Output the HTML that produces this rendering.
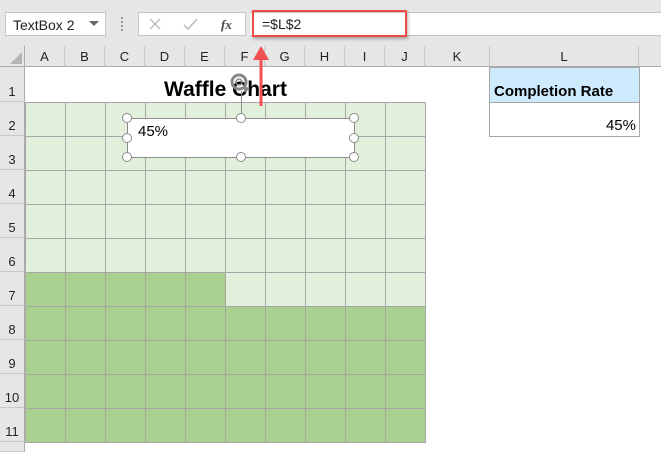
<!DOCTYPE html>
<html><head><meta charset="utf-8"><style>
*{margin:0;padding:0;box-sizing:border-box}
body{width:661px;height:448px;overflow:hidden;background:#fff;font-family:"Liberation Sans",Arial,sans-serif;position:relative}
.abs{position:absolute}
.top{left:0;top:0;width:661px;height:46px;background:#e6e6e6}
.namebox{left:5px;top:12px;width:101px;height:24px;background:#fff;border:1px solid #c6c6c6;font-size:14px;color:#222;padding:4px 0 0 7px}
.fx{left:138px;top:12px;width:108px;height:24px;background:#fff;border:1px solid #c6c6c6}
.finput{left:250px;top:12px;width:411px;height:24px;background:#fff;border-top:1px solid #c6c6c6;border-bottom:1px solid #c6c6c6}
.red{left:252px;top:10px;width:155px;height:27px;border:2px solid #ee4b4b;box-shadow:1px 2px 3px rgba(0,0,0,.3)}
.ch{top:46px;height:21px;background:#e6e6e6;border-right:1px solid #c8c8c8;border-bottom:1px solid #ababab;font-size:13px;text-align:center;line-height:21px;color:#222}
.rh{left:0;width:25px;background:#e6e6e6;border-bottom:1px solid #c8c8c8;border-right:1px solid #ababab;font-size:13px;color:#222;text-align:center;display:flex;align-items:flex-end;justify-content:center;padding-bottom:2px}
.c{border-right:1px solid #a6a6a6;border-bottom:1px solid #a6a6a6}
.lt{background:#e2efda}.dk{background:#a9d08e}
.h{width:10px;height:10px;border:1.5px solid #8c8c8c;border-radius:50%;background:#fff}
</style></head><body>
<div class="abs top"></div>
<div class="abs namebox">TextBox 2</div>
<svg class="abs" style="left:89px;top:21px" width="10" height="6"><path d="M0 0 L10 0 L5 5Z" fill="#666"/></svg>
<div class="abs" style="left:121px;top:17px;width:2px;height:16px;background:repeating-linear-gradient(#999 0 2px,transparent 2px 4px)"></div>
<div class="abs fx"></div>
<svg class="abs" style="left:148px;top:17px" width="90" height="16">
<path d="M2 2 L12 12 M12 2 L2 12" stroke="#b8b8b8" stroke-width="1.3"/>
<path d="M36 8 L40 12 L49 2" stroke="#b8b8b8" stroke-width="1.5" fill="none"/>
<text x="73" y="12" font-family="Liberation Serif" font-style="italic" font-weight="bold" font-size="13" fill="#444">fx</text>
</svg>
<div class="abs finput"></div>
<div class="abs" style="left:262px;top:16px;font-size:14px;color:#222">=$L$2</div>
<div class="abs red"></div>

<div class="abs" style="left:0;top:46px;width:25px;height:21px;background:#e6e6e6;border-right:1px solid #ababab;border-bottom:1px solid #ababab"></div>
<svg class="abs" style="left:10px;top:52px" width="13" height="13"><path d="M12 0 L12 12 L0 12Z" fill="#b5b5b5"/></svg>
<script>
var cw=[["A",25,40],["B",65,40],["C",105,40],["D",145,40],["E",185,40],["F",225,40],["G",265,40],["H",305,40],["I",345,40],["J",385,40],["K",425,65],["L",490,149],["",639,30]];
var h="";
cw.forEach(function(c){h+='<div class="abs ch" style="left:'+c[1]+'px;width:'+c[2]+'px">'+c[0]+'</div>';});
for(var r=1;r<=11;r++){var t=67+(r-1)*34+(r>1?1:0);var hh=r==1?35:34;h+='<div class="abs rh" style="top:'+t+'px;height:'+hh+'px">'+r+'</div>';}
h+='<div class="abs rh" style="top:442px;height:10px"></div>';
for(var r=2;r<=11;r++){for(var i=0;i<10;i++){var t=102+(r-2)*34;var dark=(r>=8)||(r==7&&i<5);
h+='<div class="abs c '+(dark?'dk':'lt')+'" style="left:'+(25+i*40)+'px;top:'+t+'px;width:41px;height:35px;border:1px solid #a6a6a6"></div>';}}
document.write(h);
</script>
<div class="abs" style="left:25px;top:442px;width:401px;height:1px;background:#a6a6a6"></div>
<div class="abs" style="left:25px;top:78px;width:401px;text-align:center;font-weight:bold;font-size:21px;color:#000">Waffle Chart</div>
<div class="abs" style="left:489px;top:67px;width:151px;height:36px;background:#cdebfd;border:1px solid #a6a6a6;font-weight:bold;font-size:15px;padding:15px 0 0 4px">Completion Rate</div>
<div class="abs" style="left:489px;top:102px;width:151px;height:35px;border:1px solid #a6a6a6;font-size:15px;text-align:right;padding:14px 3px 0 0">45%</div>
<div class="abs" style="left:127px;top:118px;width:228px;height:40px;background:#fff;border:1px solid #8c8c8c;font-size:15px;padding:4px 0 0 10px">45%</div>
<div class="abs" style="left:241px;top:91px;width:1px;height:27px;background:#8c8c8c"></div>
<svg class="abs" style="left:228px;top:71px" width="26" height="24"><circle cx="11" cy="11" r="7" fill="none" stroke="#888" stroke-width="3"/><circle cx="11" cy="11" r="3" fill="none" stroke="#888" stroke-width="1.5"/><path d="M15 15 L22 17 L17 22Z" fill="#888"/></svg>
<div class="abs h" style="left:122px;top:113px"></div>
<div class="abs h" style="left:236px;top:113px"></div>
<div class="abs h" style="left:349px;top:113px"></div>
<div class="abs h" style="left:122px;top:133px"></div>
<div class="abs h" style="left:349px;top:133px"></div>
<div class="abs h" style="left:122px;top:152px"></div>
<div class="abs h" style="left:236px;top:152px"></div>
<div class="abs h" style="left:349px;top:152px"></div>
<svg class="abs" style="left:250px;top:44px" width="22" height="66"><path d="M11 62 L11 10" stroke="#f05050" stroke-width="3"/><path d="M3 16 L11 2 L19 16Z" fill="#f05050"/></svg>
</body></html>
